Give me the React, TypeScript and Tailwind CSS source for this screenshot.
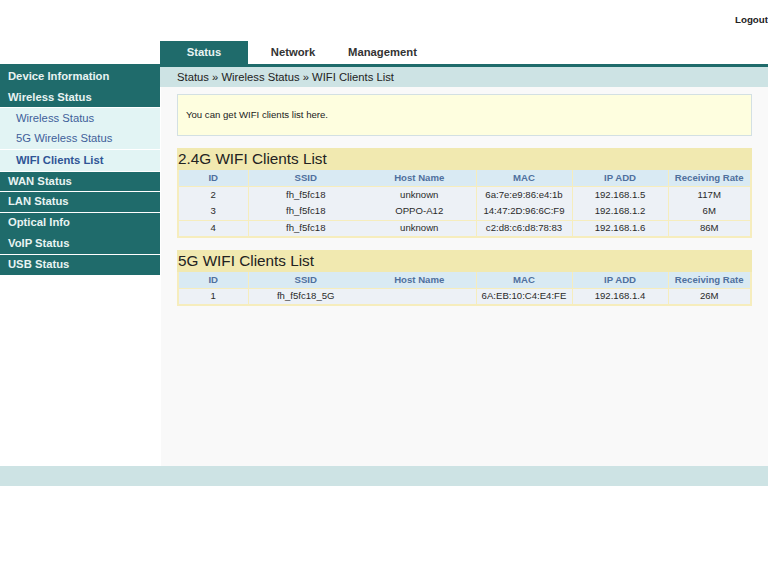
const sideClass = 'flex items-center pl-2 text-[11.25px] font-bold text-[#e8f3f2]'
const sideBlock = 'mt-[1px] bg-[#1f6b6b] pl-2 flex items-center text-[11.25px] font-bold text-[#e8f3f2]'

const columns = ['ID', 'SSID', 'Host Name', 'MAC', 'IP ADD', 'Receiving Rate']

const list24 = [
  { id: '2', ssid: 'fh_f5fc18', host: 'unknown', mac: '6a:7e:e9:86:e4:1b', ip: '192.168.1.5', rate: '117M', line: false },
  { id: '3', ssid: 'fh_f5fc18', host: 'OPPO-A12', mac: '14:47:2D:96:6C:F9', ip: '192.168.1.2', rate: '6M', line: true },
  { id: '4', ssid: 'fh_f5fc18', host: 'unknown', mac: 'c2:d8:c6:d8:78:83', ip: '192.168.1.6', rate: '86M', line: false },
]

const list5 = [
  { id: '1', ssid: 'fh_f5fc18_5G', host: '', mac: '6A:EB:10:C4:E4:FE', ip: '192.168.1.4', rate: '26M', line: false },
]

type Client = (typeof list24)[number]

function ClientsTable({ title, clients }: { title: string; clients: Client[] }) {
  const cell = 'text-center text-[9.6px] text-[#2a2a2a] h-[17px] p-0 border-l border-[#f6edbd] first:border-l-0'
  return (
    <div className="ml-4 w-[575px]">
      <div className="h-[22px] pl-[1px] flex items-center bg-[#f1e9b0] text-[15.3px] text-[#222]">{title}</div>
      <table className="w-full table-fixed border-collapse border-x-2 border-b-2 border-[#f6edbd]">
        <colgroup>
          <col className="w-[70px]" />
          <col className="w-[115px]" />
          <col className="w-[113px]" />
          <col className="w-[96px]" />
          <col className="w-[96px]" />
          <col />
        </colgroup>
        <thead>
          <tr className="bg-[#d9eaf3] border-b border-[#f6edbd]">
            {columns.map((c, i) => (
              <th
                key={c}
                className={`h-[16px] p-0 text-center text-[9.6px] font-bold text-[#4f709e] ${i === 0 || i === 2 ? '' : 'border-l border-[#f6edbd]'}`}
              >
                {c}
              </th>
            ))}
          </tr>
        </thead>
        <tbody>
          {clients.map((r) => (
            <tr key={r.id} className={`bg-[#edf1f6] ${r.line ? 'border-b border-[#f6edbd]' : ''}`}>
              <td className={cell}>{r.id}</td>
              <td className={cell}>{r.ssid}</td>
              <td className="text-center text-[9.6px] text-[#2a2a2a] h-[17px] p-0">{r.host}</td>
              <td className={cell}>{r.mac}</td>
              <td className={cell}>{r.ip}</td>
              <td className={cell}>{r.rate}</td>
            </tr>
          ))}
        </tbody>
      </table>
    </div>
  )
}

export default function App() {
  return (
    <div className="w-[768px] h-[574px] bg-white font-['Liberation_Sans',Arial,sans-serif] overflow-hidden">
      {/* top */}
      <div className="h-[41px] flex justify-end items-start pt-[13px]">
        <span className="text-[9.75px] font-bold text-[#222]">Logout</span>
      </div>

      {/* tabs */}
      <div className="h-[23px] pl-40 flex items-center text-[11.25px] font-bold">
        <div className="w-[88px] h-full flex items-center justify-center bg-[#1f6b6b] text-[#e8f3f2]">Status</div>
        <div className="ml-[1px] w-[88px] h-full flex items-center justify-center text-[#333]">Network</div>
        <div className="ml-[1px] w-[89px] h-full flex items-center justify-center text-[#333]">Management</div>
      </div>

      <div className="flex h-[402px]">
        {/* sidebar */}
        <div className="w-40 shrink-0">
          <div className="bg-[#1f6b6b] h-[43px] pt-[2px]">
            <div className={`${sideClass} h-[21px]`}>Device Information</div>
            <div className={`${sideClass} h-[20px]`}>Wireless Status</div>
          </div>
          <div className="mt-[1px] bg-[#e2f4f4] h-[41px] text-[11.25px] text-[#3f5f9a]">
            <div className="h-[20px] pl-4 flex items-center">Wireless Status</div>
            <div className="h-[20px] pl-4 flex items-center">5G Wireless Status</div>
          </div>
          <div className="mt-[1px] bg-[#e2f4f4] h-[21px] pl-4 pb-[1px] flex items-center text-[11.25px] font-bold text-[#2f5596]">
            WIFI Clients List
          </div>
          <div className={`${sideBlock} h-[19px]`}>WAN Status</div>
          <div className={`${sideBlock} h-[20px] pb-[1px]`}>LAN Status</div>
          <div className="mt-[1px] bg-[#1f6b6b] h-[41px]">
            <div className={`${sideClass} h-[20px] pb-[1px]`}>Optical Info</div>
            <div className={`${sideClass} h-[21px]`}>VoIP Status</div>
          </div>
          <div className={`${sideBlock} h-[20px] pb-[1px]`}>USB Status</div>
        </div>

        {/* main */}
        <div className="flex-1 flex flex-col">
          <div className="h-[3px] bg-[#1f6b6b]" />
          <div className="h-[20px] pl-[17px] flex items-center bg-[#cde3e4] text-[11.25px] text-[#222]">
            Status » Wireless Status » WIFI Clients List
          </div>
          <div className="flex-1 bg-[#f9f9f9] border-l border-white pt-[7px]">
            <div className="ml-4 w-[575px] h-[42px] pl-2 flex items-center bg-[#fefedf] border border-[#d3e0e3] text-[9.6px] text-[#222]">
              You can get WIFI clients list here.
            </div>
            <div className="mt-3">
              <ClientsTable title="2.4G WIFI Clients List" clients={list24} />
            </div>
            <div className="mt-3">
              <ClientsTable title="5G WIFI Clients List" clients={list5} />
            </div>
          </div>
        </div>
      </div>

      {/* footer */}
      <div className="h-[20px] bg-[#cde3e4]" />
    </div>
  )
}
